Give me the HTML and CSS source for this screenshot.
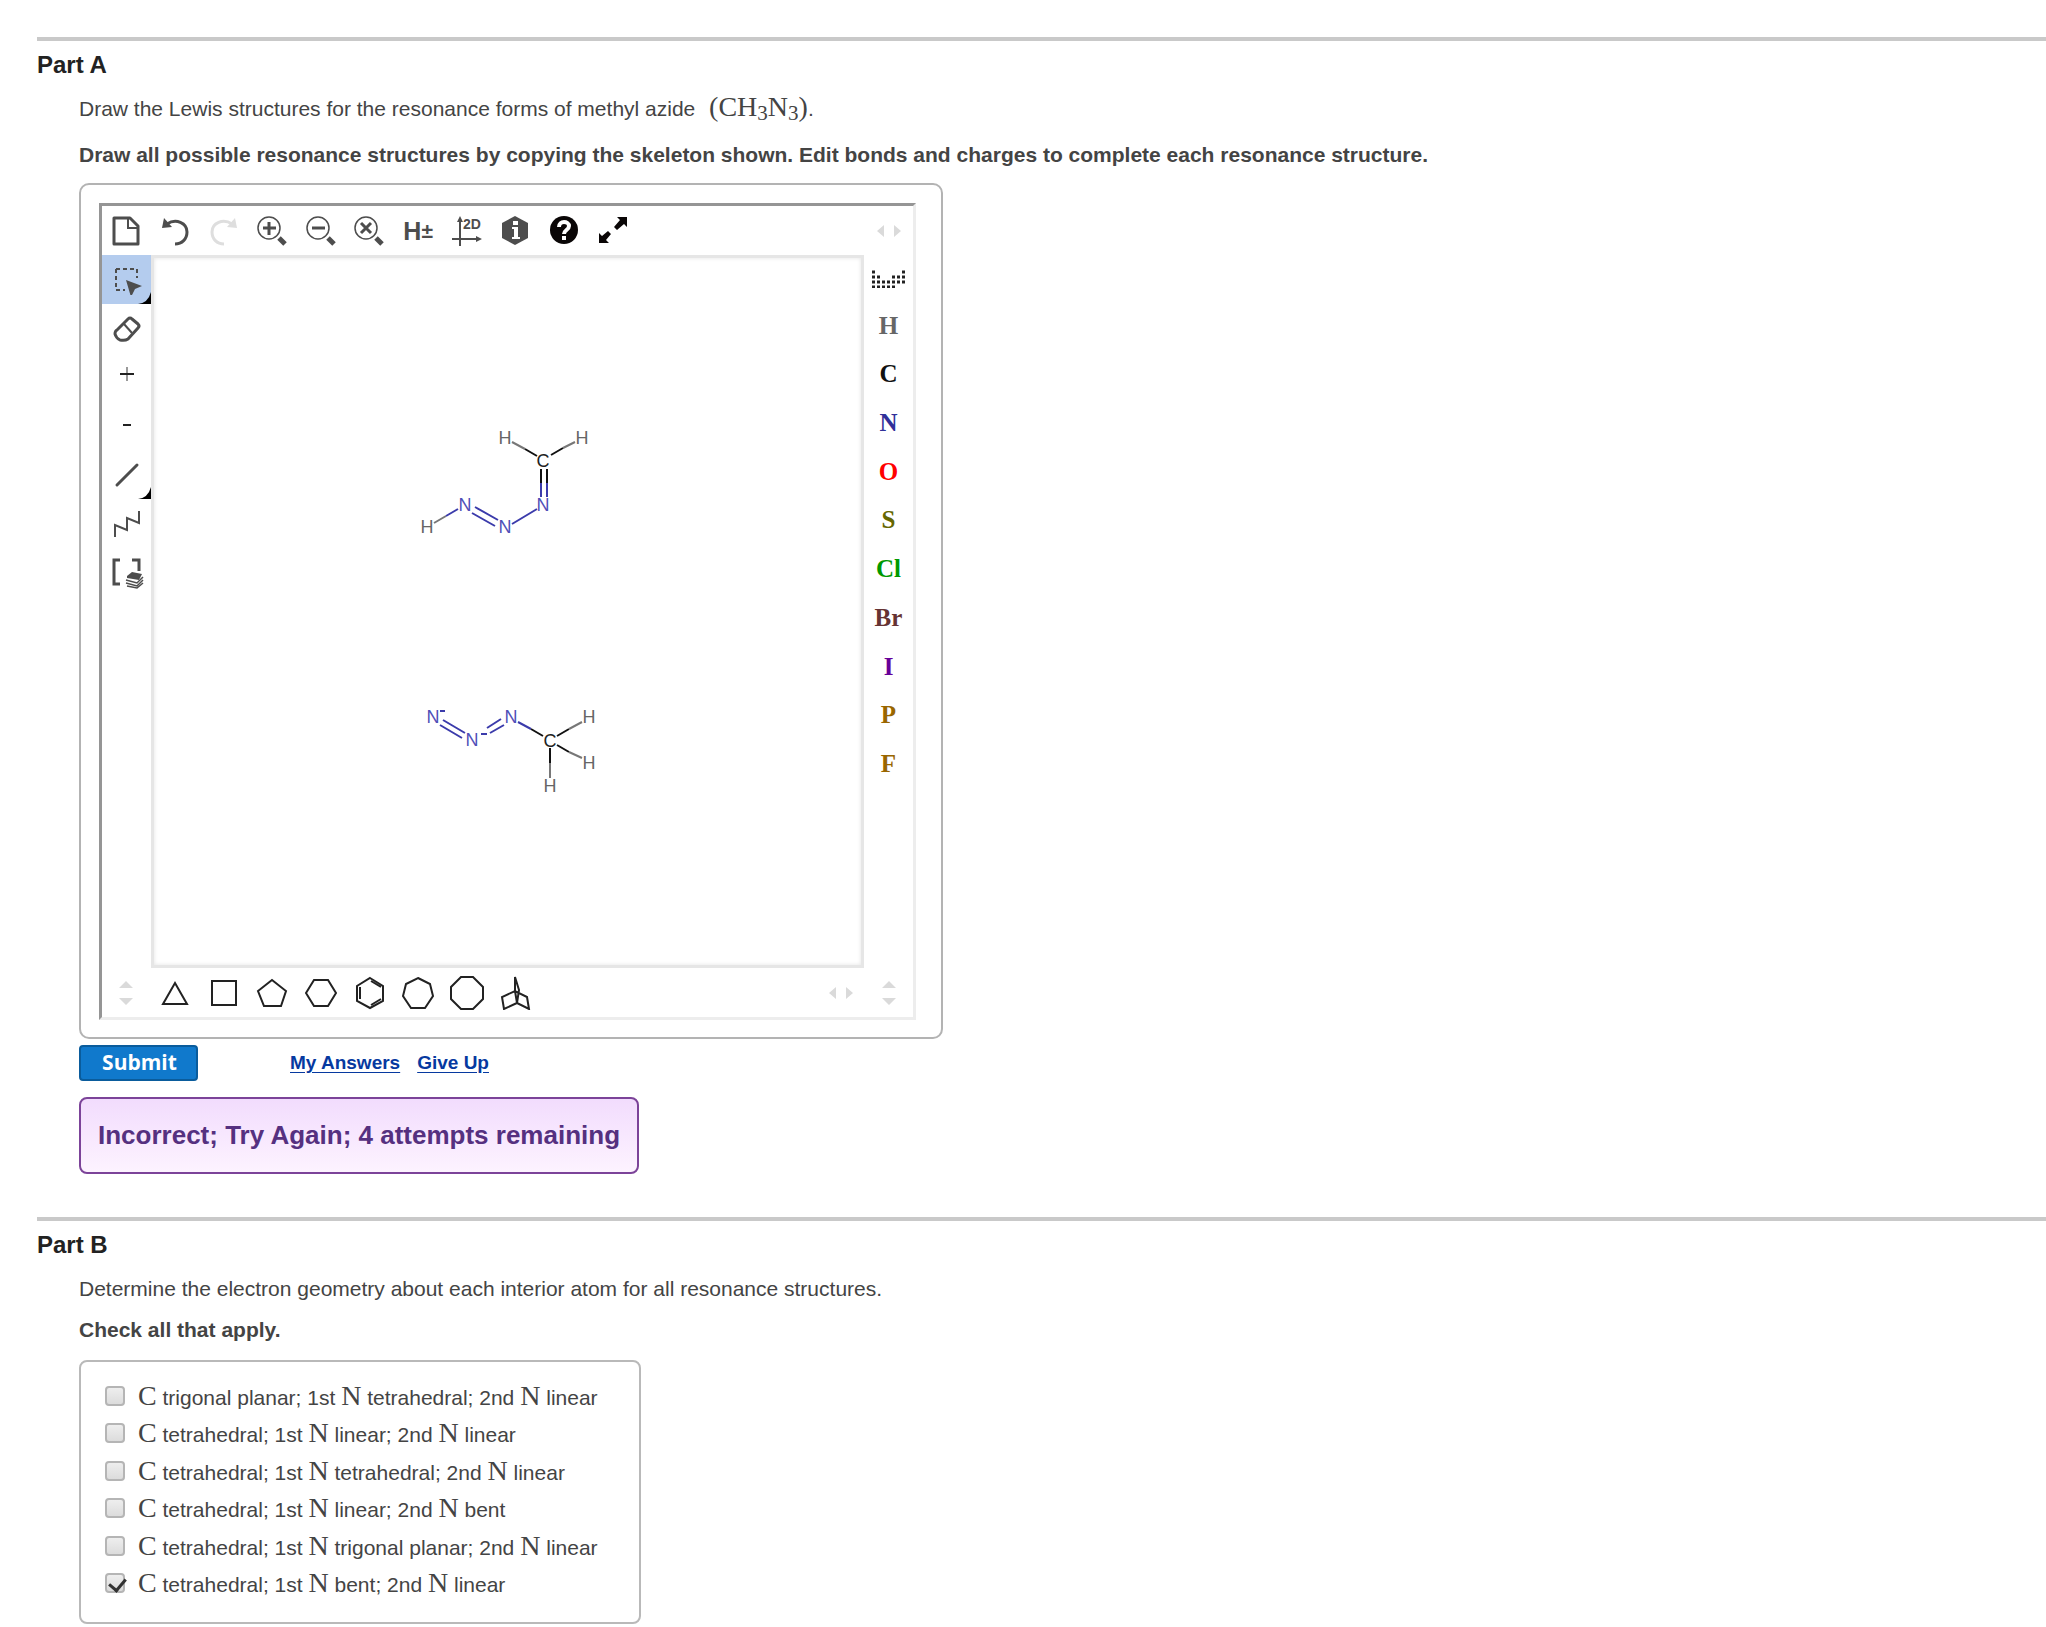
FILE: index.html
```html
<!DOCTYPE html>
<html lang="en">
<head>
<meta charset="utf-8">
<title>Methyl azide resonance structures</title>
<link rel="stylesheet" href="styles.css">
</head>
<body>
<main class="assignment">
<section class="part">
  <h2 class="part-title">Part A</h2>
  <div class="part-body">
    <p class="question">Draw the Lewis structures for the resonance forms of methyl azide <span class="math">(CH<sub>3</sub>N<sub>3</sub>)</span>.</p>
    <p class="instruction">Draw all possible resonance structures by copying the skeleton shown. Edit bonds and charges to complete each resonance structure.</p>
    <div class="editor-box">
      <div class="editor">
        <div class="bar bar-top">
          <div class="tools-row">
            <button class="tool" aria-label="New"><svg width="32" height="32" viewBox="0 0 32 32" fill="none" stroke="#4d4d4d"><path d="M4 3h16l8 8v18H4z" stroke-width="3" stroke-linejoin="round"/><path d="M18 4v9h9" stroke-width="2"/></svg></button>
            <button class="tool" aria-label="Undo"><svg width="32" height="32" viewBox="0 0 32 32"><path d="M8 9c9-6 20-1 20 8 0 7-5 12-12 12" fill="none" stroke="#4d4d4d" stroke-width="3"/><path d="M5 3l8 9-10 1z" fill="#4d4d4d"/></svg></button>
            <button class="tool" aria-label="Redo" disabled><svg width="32" height="32" viewBox="0 0 32 32"><path d="M24 9C15 3 4 8 4 17c0 7 5 12 12 12" fill="none" stroke="#dedede" stroke-width="3"/><path d="M27 3l-8 9 10 1z" fill="#dedede"/></svg></button>
            <button class="tool" aria-label="Zoom in"><svg width="32" height="32" viewBox="0 0 32 32" fill="none" stroke="#4d4d4d"><circle cx="13" cy="13" r="11" stroke-width="1.500"/><path d="M7 13h13M13 7v13" stroke-width="3"/><path d="M23 23l6 6" stroke-width="5"/></svg></button>
            <button class="tool" aria-label="Zoom out"><svg width="32" height="32" viewBox="0 0 32 32" fill="none" stroke="#4d4d4d"><circle cx="13" cy="13" r="11" stroke-width="1.500"/><path d="M7 13h13" stroke-width="3"/><path d="M23 23l6 6" stroke-width="5"/></svg></button>
            <button class="tool" aria-label="Reset zoom"><svg width="32" height="32" viewBox="0 0 32 32" fill="none" stroke="#4d4d4d"><circle cx="13" cy="13" r="11" stroke-width="1.500"/><path d="M8 8l10 10M18 8L8 18" stroke-width="3"/><path d="M23 23l6 6" stroke-width="5"/></svg></button>
            <button class="tool tool-hydrogen" aria-label="Toggle hydrogens">H<span>±</span></button>
            <button class="tool" aria-label="Clean in 2D"><svg width="32" height="32" viewBox="0 0 32 32"><path d="M9 31V5M1 24h26" fill="none" stroke="#4d4d4d" stroke-width="2"/><path d="M9 1l3 6H6zM31 24l-6-3v6z" fill="#4d4d4d"/><text x="12" y="14" font-size="14" class="svg-bold">2D</text></svg></button>
            <button class="tool" aria-label="Information"><svg width="32" height="32" viewBox="0 0 32 32"><path d="M16 1l13 7v15l-13 7-13-7V8z" fill="#4d4d4d"/><path d="M14 6h5v4h-5zM13 12h6v10h2v2h-8v-2h2v-8h-2z" fill="#fff"/></svg></button>
            <button class="tool" aria-label="Help"><svg width="32" height="32" viewBox="0 0 32 32"><circle cx="16" cy="15" r="14" fill="#0a0606"/><path d="M11 12c0-7 10-6 10-1 0 4-5 4-5 8" fill="none" stroke="#fff" stroke-width="4"/><path d="M14 21h4v4h-4z" fill="#fff"/></svg></button>
            <button class="tool" aria-label="Full screen"><svg width="32" height="32" viewBox="0 0 32 32"><path d="M20 2h10v10l-3-3-7 6-3-3 6-7zM2 18l3 3 6-5 3 3-5 6 3 3H2z" fill="#0a0606"/></svg></button>
          </div>
          <div class="tool"><svg width="26" height="16" viewBox="0 0 26 16" fill="#dadada"><path d="M8 2v12L1 8zM18 2v12l7-6z"/></svg></div>
        </div>
        <div class="bar bar-left">
          <button class="tool tool-selected" aria-label="Selection"><svg width="32" height="32" viewBox="0 0 32 32"><path d="M5 6h21v9M5 6v21h9" fill="none" stroke="#4d4d4d" stroke-width="2" stroke-dasharray="4 3"/><path d="M15 17l16 6-7 3-4 8z" fill="#4d4d4d"/></svg><svg class="corner" width="13" height="12" viewBox="0 0 13 12"><path d="M13 0v12H0Q10 11 13 0z"/></svg></button>
          <button class="tool" aria-label="Erase"><svg width="32" height="32" viewBox="0 0 32 32" fill="none" stroke="#4d4d4d"><path d="M17 7q2-2 4 0l6 5q2 2 0 4L17 27q-3 2-8 1-4-2-5-6 0-3 2-4z" stroke-width="3" stroke-linejoin="round"/><path d="M13 12l8 9" stroke-width="2"/></svg></button>
          <button class="tool tool-charge" aria-label="Increase charge"><svg width="14" height="14" viewBox="0 0 14 14"><path d="M7 0v14" stroke="#999" stroke-width="2"/><path d="M0 7h14" stroke="#222" stroke-width="2"/></svg></button>
          <button class="tool" aria-label="Decrease charge"><svg width="8" height="2" viewBox="0 0 8 2"><path d="M0 1h8" stroke="#222" stroke-width="2"/></svg></button>
          <button class="tool" aria-label="Single bond"><svg width="32" height="32" viewBox="0 0 32 32"><path d="M6 27L26 7" stroke="#4d4d4d" stroke-width="3" stroke-linecap="round"/></svg><svg class="corner" width="13" height="12" viewBox="0 0 13 12"><path d="M13 0v12H0Q10 11 13 0z"/></svg></button>
          <button class="tool" aria-label="Chain"><svg width="32" height="32" viewBox="0 0 32 32"><path d="M4 30V18l12 5V11l12 5V4" fill="none" stroke="#4d4d4d" stroke-width="2"/></svg></button>
          <button class="tool" aria-label="Group"><svg width="34" height="34" viewBox="0 0 34 34"><path d="M10 5H4v24h6M22 5h7v11" fill="none" stroke="#4d4d4d" stroke-width="3"/><path d="M17 21l5-4 10 2-3 6-12-2z" fill="#4d4d4d"/><path d="M16 25l11 3 6-6M16 28l11 3 6-6M17 31l10 2 6-5" fill="none" stroke="#4d4d4d" stroke-width="1.500"/></svg></button>
        </div>
        <div class="canvas">
          <svg class="drawing" viewBox="154 258 707 707" role="img" aria-label="Two methyl azide skeletons">
            <g class="bonds">
              <path class="b-h" d="M512 442l13 7M563 448l12-6M434 523l12-7"/>
              <path class="b-c" d="M525 449l12 7M551 455l12-7M541 469v14M547 469v14"/>
              <path class="b-n" d="M541 483v14M547 483v14M512 524l25-15M475 507l23 13M472 513l23 13M446 516l12-7"/>
              <path class="b-n" d="M443 720l22 13M440 725l22 13M487 728l14-9M490 733l14-8M518 722l13 7M440 711h5M481 734h6M484 733v2"/>
              <path class="b-c" d="M531 729l12 7M557 736l12-7M557 745l12 7M550 748v15"/>
              <path class="b-h" d="M569 729l13-7M569 752l13 6M550 763v15"/>
            </g>
            <g class="atoms">
              <text class="a-h" x="505" y="444">H</text><text class="a-h" x="582" y="444">H</text><text class="a-c" x="543" y="467">C</text>
              <text class="a-n" x="543" y="511">N</text><text class="a-n" x="505" y="533">N</text><text class="a-n" x="465" y="511">N</text><text class="a-h" x="427" y="533">H</text>
              <text class="a-n" x="433" y="723">N</text><text class="a-n" x="472" y="746">N</text><text class="a-n" x="511" y="723">N</text><text class="a-c" x="550" y="747">C</text>
              <text class="a-h" x="589" y="723">H</text><text class="a-h" x="589" y="769">H</text><text class="a-h" x="550" y="792">H</text>
            </g>
          </svg>
        </div>
        <div class="bar bar-right">
          <button class="tool" aria-label="Periodic table"><svg width="34" height="18" viewBox="0 0 34 18" stroke="#222" stroke-width="3" stroke-dasharray="3 2" fill="none"><path d="M0 2h3M30 2h3"/><path d="M0 7h8M20 7h13"/><path d="M0 12h33"/><path d="M0 17h23"/></svg></button>
          <button class="tool atom el-h">H</button>
          <button class="tool atom el-c">C</button>
          <button class="tool atom el-n">N</button>
          <button class="tool atom el-o">O</button>
          <button class="tool atom el-s">S</button>
          <button class="tool atom el-cl">Cl</button>
          <button class="tool atom el-br">Br</button>
          <button class="tool atom el-i">I</button>
          <button class="tool atom el-p">P</button>
          <button class="tool atom el-p">F</button>
        </div>
        <div class="bar bar-bottom">
          <div class="tools-row">
            <div class="tool"><svg width="14" height="26" viewBox="0 0 14 26" fill="#dadada"><path d="M0 8h14L7 1zM0 18h14l-7 7z"/></svg></div>
            <button class="tool ring" aria-label="Cyclopropane"><svg width="34" height="34" viewBox="0 0 34 34"><path d="M17 7l12 21H5z"/></svg></button>
            <button class="tool ring" aria-label="Cyclobutane"><svg width="34" height="34" viewBox="0 0 34 34"><path d="M5 5h24v24H5z"/></svg></button>
            <button class="tool ring" aria-label="Cyclopentane"><svg width="34" height="34" viewBox="0 0 34 34"><path d="M17 4l14 11-5 15H9L3 15z"/></svg></button>
            <button class="tool ring" aria-label="Cyclohexane"><svg width="34" height="34" viewBox="0 0 34 34"><path d="M2 17l8-13h14l8 13-8 13H10z"/></svg></button>
            <button class="tool ring" aria-label="Benzene"><svg width="34" height="34" viewBox="0 0 34 34"><path d="M17 2l13 8v15l-13 7-13-7V10zM7 11v12M18 5l10 6M18 29l10-6"/></svg></button>
            <button class="tool ring" aria-label="Cycloheptane"><svg width="34" height="34" viewBox="0 0 34 34"><path d="M17 2l12 6 3 12-8 12H10L2 20 5 8z"/></svg></button>
            <button class="tool ring" aria-label="Cyclooctane"><svg width="34" height="34" viewBox="0 0 34 34"><path d="M11 1h12l10 10v12L23 33H11L1 23V11z"/></svg></button>
            <button class="tool ring" aria-label="Bicyclic ring"><svg width="34" height="34" viewBox="0 0 34 34"><path d="M16 15V1l4 13-2 13-13 6-2-12 13-6 12 6 2 12-12-6-2-12"/></svg></button>
          </div>
          <div class="scrolls">
            <div class="tool"><svg width="26" height="16" viewBox="0 0 26 16" fill="#dadada"><path d="M8 2v12L1 8zM18 2v12l7-6z"/></svg></div>
            <div class="tool"><svg width="14" height="26" viewBox="0 0 14 26" fill="#dadada"><path d="M0 8h14L7 1zM0 18h14l-7 7z"/></svg></div>
          </div>
        </div>
      </div>
    </div>
    <div class="actions">
      <button class="submit" type="submit">Submit</button>
      <a href="#answers">My Answers</a>
      <a href="#give-up">Give Up</a>
    </div>
    <p class="feedback">Incorrect; Try Again; 4 attempts remaining</p>
  </div>
</section>
<section class="part">
  <h2 class="part-title">Part B</h2>
  <div class="part-body">
    <p class="question">Determine the electron geometry about each interior atom for all resonance structures.</p>
    <p class="instruction">Check all that apply.</p>
    <div class="choices">
      <label class="choice"><input type="checkbox"><span><b>C</b> trigonal planar; 1st <b>N</b> tetrahedral; 2nd <b>N</b> linear</span></label>
      <label class="choice"><input type="checkbox"><span><b>C</b> tetrahedral; 1st <b>N</b> linear; 2nd <b>N</b> linear</span></label>
      <label class="choice"><input type="checkbox"><span><b>C</b> tetrahedral; 1st <b>N</b> tetrahedral; 2nd <b>N</b> linear</span></label>
      <label class="choice"><input type="checkbox"><span><b>C</b> tetrahedral; 1st <b>N</b> linear; 2nd <b>N</b> bent</span></label>
      <label class="choice"><input type="checkbox"><span><b>C</b> tetrahedral; 1st <b>N</b> trigonal planar; 2nd <b>N</b> linear</span></label>
      <label class="choice"><input type="checkbox" checked><span><b>C</b> tetrahedral; 1st <b>N</b> bent; 2nd <b>N</b> linear</span></label>
    </div>
  </div>
</section>
</main>
</body>
</html>
```
FILE: styles.css
```css
* { box-sizing: border-box; }

body {
  margin: 0;
  background: #fff;
  color: #444;
  font: 21px/24px "Liberation Sans", Arial, sans-serif;
}

p, h2 { margin: 0; }

.assignment { padding: 37px 0 3px 37px; }

.part { border-top: 4px solid #c9c9c9; }
.part + .part { margin-top: 43px; }

.part-title {
  padding-top: 12px;
  color: #222;
  font-size: 24px;
  line-height: 24px;
}

.part-body { padding: 20px 0 0 42px; }
.question { line-height: 24px; }
.instruction { margin-top: 22px; font-weight: bold; }
.part + .part .instruction { margin-top: 17px; }

.math {
  margin-left: 8px;
  font-family: "Liberation Serif", serif;
  font-size: 28px;
  line-height: 0;
}
.math sub { font-size: 21px; line-height: 0; vertical-align: -4px; }

/* structure editor */
.editor-box {
  width: 864px;
  max-width: 100%;
  margin-top: 16px;
  padding: 18px 25px 17px 18px;
  border: 2px solid #b3b3b3;
  border-radius: 10px;
}

.editor {
  display: grid;
  grid-template-columns: 49px 1fr 49px;
  grid-template-rows: 49px auto 49px;
  border: 3px solid;
  border-color: #959595 #ededed #ededed #959595;
}

.bar { display: grid; }
.bar-top, .bar-bottom {
  grid-column: 1 / -1;
  grid-template-columns: 1fr auto;
}
.bar-left, .bar-right {
  align-content: start;
  grid-auto-rows: 1fr;
}
.bar-left { height: 341px; }
.bar-right { height: 536px; }

.tools-row {
  display: grid;
  grid-auto-flow: column;
  grid-auto-columns: 1fr;
  width: 535px;
}
.bar-bottom .tools-row { width: 438px; }
.scrolls { display: flex; }

.tool {
  position: relative;
  display: flex;
  align-items: center;
  justify-content: center;
  min-width: 48px;
  padding: 0;
  border: 0;
  background: none;
  color: #4d4d4d;
  font: bold 25px/30px "Liberation Sans", Arial, sans-serif;
}
.tool-selected { background: #b4ccee; }
.tool-charge { padding-bottom: 6px; }
.tool-hydrogen span { font-size: 21px; }
.svg-bold { font-family: "Liberation Sans", Arial, sans-serif; font-weight: bold; fill: #4d4d4d; }
.corner { position: absolute; right: 0; bottom: 0; }

.atom {
  padding-bottom: 5px;
  font: bold 25px/30px "Liberation Serif", serif;
}
.el-h { color: #666; }
.el-c { color: #111; }
.el-n { color: #303099; }
.el-o { color: #f00; }
.el-s { color: #660; }
.el-cl { color: #090; }
.el-br { color: #633; }
.el-i { color: #609; }
.el-p { color: #960; }

.canvas {
  border: 3px solid #e6e6e6;
  box-shadow: inset 0 0 4px #e4e4e4;
}
.drawing { display: block; width: 100%; }
.bonds { fill: none; stroke-width: 2; }
.b-h { stroke: #777; }
.b-c { stroke: #111; }
.b-n { stroke: #3b3bab; }
.atoms { font-size: 18px; text-anchor: middle; }
.a-h { fill: #666; }
.a-c { fill: #222; }
.a-n { fill: #5050b8; }

.ring svg { fill: none; stroke: #222; stroke-width: 2; }

/* answer controls */
.actions {
  display: flex;
  align-items: center;
  gap: 17px;
  margin-top: 6px;
}
.submit {
  width: 119px;
  height: 36px;
  margin-right: 75px;
  padding: 0 0 2px 2px;
  border: 2px solid #0a5c9c;
  border-radius: 4px;
  background: #1079cc;
  color: #fff;
  font: bold 21px/28px "Open Sans", sans-serif;
}
.actions a {
  color: #0639a0;
  font-size: 19px;
  font-weight: bold;
  text-underline-offset: 3px;
}

.feedback {
  width: fit-content;
  margin-top: 16px;
  padding: 22px 17px;
  border: 2px solid #7c4399;
  border-radius: 8px;
  background: linear-gradient(#f2dcfd, #fdf3ff);
  color: #553080;
  font-size: 26px;
  font-weight: bold;
  line-height: 29px;
}

/* choice list */
.choices {
  display: grid;
  grid-auto-rows: 1fr;
  width: 562px;
  max-width: 100%;
  height: 264px;
  margin-top: 18px;
  padding: 17px 22px 18px 24px;
  border: 2px solid #b9b9b9;
  border-radius: 8px;
}
.choice { display: flex; align-items: center; gap: 13px; }
.choice b {
  font: 28px/0 "Liberation Serif", serif;
}
.choice input {
  appearance: none;
  width: 20px;
  height: 20px;
  margin: 0 0 4px;
  border: 2px solid #b5b5b5;
  border-radius: 4px;
  background: linear-gradient(#eee, #dcdcdc);
}
.choice input:checked::after {
  content: "";
  display: block;
  width: 8px;
  height: 13px;
  margin: 0 0 0 5px;
  border: solid #333;
  border-width: 0 3px 3px 0;
  transform: rotate(40deg);
}
```
